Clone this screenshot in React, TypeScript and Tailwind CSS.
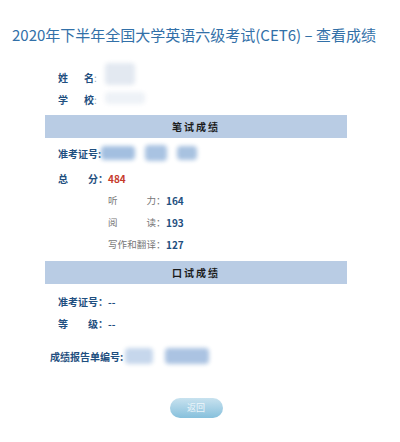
import React from "react";

const F = { fontFamily: '"Noto Sans CJK SC", "Liberation Sans", sans-serif' };

function Label({ text, w = "w-[40px]" }: { text: string; w?: string }) {
  return (
    <span className={`${w} shrink-0 whitespace-nowrap inline-block text-justify [text-align-last:justify]`}>{text}</span>
  );
}

function Smudge({ w, h, cls }: { w: string; h: string; cls: string }) {
  return <span className={`inline-block ${w} ${h} ${cls} blur-[2px] rounded-sm`} />;
}

function Bar({ text }: { text: string }) {
  return (
    <div className="h-[23px] bg-[#b9cce4] flex items-center justify-center text-[10px] font-bold text-[#1b1b1b] tracking-[2px]">
      {text}
    </div>
  );
}

export default function App() {
  return (
    <div className="w-[400px] h-[442px] bg-white overflow-hidden" style={F}>
      <div className="pt-[26px] pl-[12px] text-[15px] leading-[18px] text-[#3270a8] whitespace-nowrap">
        2020年下半年全国大学英语六级考试(CET6) – 查看成绩
      </div>
      <div className="ml-[45px] w-[302px]">
        <div className="mt-[22px] pl-[13px] text-[10px] font-bold text-[#1f4f80]">
          <div className="h-[22px] flex items-center">
            <Label text="姓名" w="w-[36px]" />
            <span className="font-normal text-[#9aaabb]">:</span>
            <span className="ml-[8px] relative top-[-2px]">
              <Smudge w="w-[30px]" h="h-[22px]" cls="bg-[#e3e9f1]" />
            </span>
          </div>
          <div className="h-[22px] flex items-center">
            <Label text="学校" w="w-[36px]" />
            <span className="font-normal text-[#9aaabb]">:</span>
            <span className="ml-[8px]">
              <Smudge w="w-[40px]" h="h-[12px]" cls="bg-[#eef2f7]" />
            </span>
          </div>
        </div>
        <div className="mt-[5px]">
          <Bar text="笔试成绩" />
        </div>
        <div className="pl-[13px] text-[10px]">
          <div className="mt-[4px] h-[22px] flex items-center font-bold text-[#1f4f80]">
            <Label text="准考证号" />
            <span>:</span>
            <span className="flex items-center gap-[10px]">
              <Smudge w="w-[34px]" h="h-[14px]" cls="bg-[#a3bfe0]" />
              <Smudge w="w-[22px]" h="h-[16px]" cls="bg-[#a9c3e2]" />
              <Smudge w="w-[20px]" h="h-[14px]" cls="bg-[#a8c2e0]" />
            </span>
          </div>
          <div className="mt-[3px] h-[22px] flex items-center font-bold text-[#1f4f80]">
            <Label text="总分" />
            <span className="w-[10px] shrink-0">：</span>
            <span className="text-[#c6392b]">484</span>
          </div>
          <div className="pl-[50px]">
            <div className="h-[22px] flex items-center text-[#777] text-[9.5px]">
              <Label text="听力" w="w-[48px]" />
              <span className="w-[10px] shrink-0">：</span>
              <span className="font-bold text-[#1f4f80] text-[10px]">164</span>
            </div>
            <div className="h-[22px] flex items-center text-[#777] text-[9.5px]">
              <Label text="阅读" w="w-[48px]" />
              <span className="w-[10px] shrink-0">：</span>
              <span className="font-bold text-[#1f4f80] text-[10px]">193</span>
            </div>
            <div className="h-[22px] flex items-center text-[#777] text-[9.5px]">
              <Label text="写作和翻译" w="w-[48px]" />
              <span className="w-[10px] shrink-0">：</span>
              <span className="font-bold text-[#1f4f80] text-[10px]">127</span>
            </div>
          </div>
        </div>
        <div className="mt-[6px]">
          <Bar text="口试成绩" />
        </div>
        <div className="text-[10px] font-bold text-[#1f4f80]">
          <div className="pl-[13px] mt-[6px] h-[22px] flex items-center">
            <Label text="准考证号" />
            <span className="w-[10px] shrink-0">：</span>
            <span>--</span>
          </div>
          <div className="pl-[13px] h-[22px] flex items-center">
            <Label text="等级" />
            <span className="w-[10px] shrink-0">：</span>
            <span>--</span>
          </div>
          <div className="pl-[5px] mt-[11px] h-[22px] flex items-center">
            <span className="whitespace-nowrap">成绩报告单编号:</span>
            <span className="ml-[2px] flex items-center gap-[12px]">
              <Smudge w="w-[28px]" h="h-[16px]" cls="bg-[#c6d7ec]" />
              <Smudge w="w-[44px]" h="h-[16px]" cls="bg-[#abc3e2]" />
            </span>
          </div>
        </div>
        <div className="mt-[31px] flex justify-center">
          <div className="w-[53px] h-[20px] rounded-full bg-gradient-to-b from-[#c8e2ef] to-[#86c0dc] flex items-center justify-center text-[9px] text-white/80">
            返回
          </div>
        </div>
      </div>
    </div>
  );
}
